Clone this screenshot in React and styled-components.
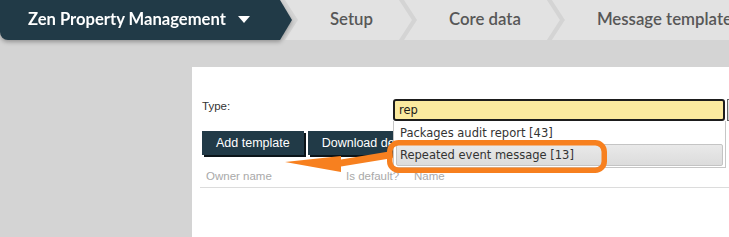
import React from "react";
import styled, { createGlobalStyle } from "styled-components";

const Global = createGlobalStyle`
  html, body { margin: 0; padding: 0; }
  body {
    background: #d4d4d4;
    overflow: hidden;
    font-family: "Liberation Sans", Arial, sans-serif;
  }
`;

const Page = styled.div`
  position: relative;
  width: 729px;
  height: 237px;
  overflow: hidden;
`;

const Nav = styled.nav`
  display: flex;
  height: 40px;
  white-space: nowrap;
`;

const BrandWrap = styled.div`
  filter: drop-shadow(0 2px 2px rgba(0, 0, 0, 0.3));
  position: relative;
  z-index: 2;
  flex: none;
`;

const Brand = styled.div`
  width: 292px;
  height: 40px;
  box-sizing: border-box;
  padding: 0 0 3px 28px;
  display: flex;
  align-items: center;
  gap: 12px;
  background: #213a47;
  color: #fff;
  font-family: Lato, "Open Sans", sans-serif;
  font-weight: 700;
  font-size: 16.6px;
  border-bottom-left-radius: 8px;
  clip-path: polygon(0 0, calc(100% - 12px) 0, 100% 50%, calc(100% - 12px) 100%, 0 100%);
`;

const Caret = styled.span`
  width: 0;
  height: 0;
  border-left: 6px solid transparent;
  border-right: 6px solid transparent;
  border-top: 7px solid #fff;
  margin-top: 2px;
`;

const Crumb = styled.div`
  flex: none;
  height: 40px;
  box-sizing: border-box;
  margin-left: ${(p) => (p.$first ? "-7px" : "-8px")};
  padding: 0 39px 3px 45px;
  display: flex;
  align-items: center;
  background: #e2e2e2;
  color: #575757;
  font-family: Lato, "Open Sans", sans-serif;
  font-weight: 600;
  font-size: 16.8px;
  clip-path: polygon(0 0, calc(100% - 13px) 0, 100% 50%, calc(100% - 13px) 100%, 0 100%, 13px 50%);
`;

const Panel = styled.main`
  margin: 27px 0 0 192px;
  height: 200px;
  background: #fff;
  padding: 32px 0 0 8px;
  box-sizing: border-box;
`;

const FormRow = styled.div`
  display: flex;
  align-items: flex-start;
`;

const Label = styled.label`
  width: 193px;
  padding: 1px 0 0 2px;
  box-sizing: border-box;
  font-size: 11.5px;
  color: #333;
  flex: none;
`;

const Combo = styled.div`
  position: relative;
  display: flex;
  gap: 2px;
  flex: none;
`;

const Input = styled.div`
  width: 332px;
  height: 22px;
  box-sizing: border-box;
  border: 2px solid #1d1d1d;
  border-radius: 3px;
  background: #fbea9f;
  padding: 0 4px;
  font-family: "DejaVu Sans", Verdana, sans-serif;
  font-size: 11.5px;
  line-height: 18px;
  color: #1a1a1a;
`;

const DropButton = styled.div`
  width: 20px;
  height: 22px;
  box-sizing: border-box;
  border: 1px solid #666;
  background: linear-gradient(#eee, #ccc);
`;

const Menu = styled.ul`
  position: absolute;
  top: 22px;
  left: 0;
  width: 333px;
  margin: 0;
  padding: 1px 2px 1px 2px;
  box-sizing: border-box;
  list-style: none;
  background: #fff;
  border: 1px solid #c6c6c6;
  border-top: none;
  z-index: 3;
  font-family: "DejaVu Sans", Verdana, sans-serif;
  font-size: 11.5px;
  color: #333;
`;

const Option = styled.li`
  height: 22px;
  box-sizing: border-box;
  padding: 0 0 0 3px;
  line-height: 20px;
  border: 1px solid ${(p) => (p.$active ? "#c4c4c4" : "transparent")};
  border-radius: 2px;
  background: ${(p) => (p.$active ? "linear-gradient(#e9e9e9, #dcdcdc)" : "transparent")};
`;

const Buttons = styled.div`
  display: flex;
  gap: 4px;
  margin: 10px 0 0 2px;
`;

const Button = styled.button`
  height: 24px;
  padding: 0 14px;
  border: none;
  border-radius: 0;
  background: #213a47;
  color: #fff;
  font-family: "Liberation Sans", Arial, sans-serif;
  font-size: 12.5px;
  box-shadow: 2px 2px 0 #0b1419;
  white-space: nowrap;
`;

const HeaderRow = styled.div`
  display: grid;
  grid-template-columns: 140px 68px 1fr;
  height: 22px;
  margin-top: 10px;
  padding-left: 6px;
  border-bottom: 1px solid #dcdcdc;
  align-items: center;
  font-size: 11.5px;
  color: #a9a9a9;
`;

const Annotation = styled.svg`
  position: absolute;
  left: 0;
  top: 0;
  z-index: 5;
  pointer-events: none;
`;

export default function App() {
  return (
    <Page>
      <Global />
      <Nav>
        <BrandWrap>
          <Brand>
            Zen Property Management
            <Caret />
          </Brand>
        </BrandWrap>
        <Crumb $first>Setup</Crumb>
        <Crumb>Core data</Crumb>
        <Crumb>Message templates</Crumb>
      </Nav>
      <Panel>
        <FormRow>
          <Label>Type:</Label>
          <Combo>
            <Input>rep</Input>
            <DropButton />
            <Menu>
              <Option>Packages audit report [43]</Option>
              <Option $active>Repeated event message [13]</Option>
            </Menu>
          </Combo>
        </FormRow>
        <Buttons>
          <Button>Add template</Button>
          <Button>Download default template</Button>
        </Buttons>
        <HeaderRow>
          <span>Owner name</span>
          <span>Is default?</span>
          <span>Name</span>
        </HeaderRow>
      </Panel>
      <Annotation width="729" height="237" viewBox="0 0 729 237">
        <polygon
          points="285,162 341,156 341,159.5 392,151 393,158 341,166.5 341,172"
          fill="#f7801f"
        />
        <rect
          x="389.75"
          y="142.75"
          width="214.5"
          height="27.5"
          rx="9"
          fill="none"
          stroke="#f7801f"
          strokeWidth="5.5"
        />
      </Annotation>
    </Page>
  );
}
